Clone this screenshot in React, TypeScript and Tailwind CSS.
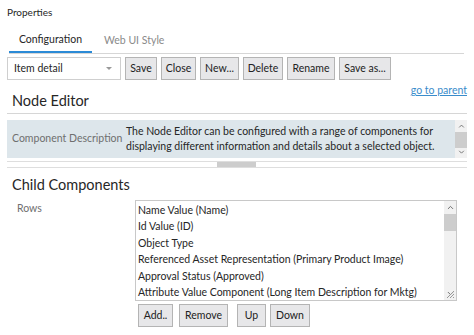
import { ChevronUp, ChevronDown } from "lucide-react";

const toolbar = [
	{ label: "Save", w: "w-[32px]" },
	{ label: "Close", w: "w-[35px]" },
	{ label: "New...", w: "w-[39px]" },
	{ label: "Delete", w: "w-[40px]" },
	{ label: "Rename", w: "w-[48px]" },
	{ label: "Save as...", w: "w-[52px]" },
];

const rows = [
	"Name Value (Name)",
	"Id Value (ID)",
	"Object Type",
	"Referenced Asset Representation (Primary Product Image)",
	"Approval Status (Approved)",
	"Attribute Value Component (Long Item Description for Mktg)",
];

function Btn({ label, className = "" }: { label: string; className?: string }) {
	return (
		<button
			className={`h-[23px] px-0 border border-[#b4b4b4] bg-[#e7e7e9] text-[10.5px] text-[#222] leading-none whitespace-nowrap ${className}`}
		>
			{label}
		</button>
	);
}

function VScroll({ className = "" }: { className?: string }) {
	return (
		<div className={`flex flex-col items-center w-[12px] bg-[#f1f1f1] ${className}`}>
			<ChevronUp size={9} strokeWidth={2.5} className="text-[#666] mt-[2px]" />
			<div className="w-full h-[17px] bg-[#cdcdcd] mt-[2px]" />
			<div className="flex-1" />
			<ChevronDown size={9} strokeWidth={2.5} className="text-[#666] mb-[2px]" />
		</div>
	);
}

export default function App() {
	return (
		<div
			className="w-[474px] h-[335px] bg-white overflow-hidden text-[#262626]"
			style={{ fontFamily: 'Lato, "Open Sans", sans-serif' }}
		>
			{/* Header */}
			<p className="pl-[7px] pt-[4px] text-[10px] leading-[16px]">Properties</p>

			{/* Tabs */}
			<div className="mx-[9px] mr-[10px] mt-[8px] flex border-b border-[#d6d6d6]">
				<div className="w-[83px] h-[25px] flex items-center justify-center text-[10.5px] border-b-2 border-[#2b8ad6] -mb-px">
					Configuration
				</div>
				<div className="pl-[12px] h-[25px] flex items-center text-[10.5px] text-[#8a8a8a]">
					Web UI Style
				</div>
			</div>

			{/* Toolbar */}
			<div className="mt-[3px] px-[7px] flex items-center gap-[4px]">
				<div className="w-[114px] h-[23px] border border-[#cfcfcf] bg-white flex items-center justify-between pl-[6px] pr-[8px] text-[10.5px]">
					<span>Item detail</span>
					<span className="w-0 h-0 border-l-[3px] border-r-[3px] border-t-[3px] border-l-transparent border-r-transparent border-t-[#999]" />
				</div>
				{toolbar.map((t) => (
					<Btn key={t.label} label={t.label} className={t.w} />
				))}
			</div>

			{/* Node editor */}
			<div className="mx-[7px] mr-[7px]">
				<div className="flex justify-end mt-[4px] h-[12px]">
					<a className="text-[10.5px] leading-[12px] text-[#3a8ccb] underline">go to parent</a>
				</div>
				<h2 className="pl-[5px] text-[14.5px] leading-[20px] -mt-[5px]">Node Editor</h2>
				<div className="mt-[2px] border-t border-[#d6d6d6]" />
				<div className="mt-[6px] flex h-[38px]">
					<div className="flex-1 bg-[#dde6eb] flex items-center">
						<span className="w-[119px] pl-[5px] text-[10.5px] text-[#6f6f6f] shrink-0">Component Description</span>
						<p className="text-[10.5px] leading-[15px]">
							The Node Editor can be configured with a range of components for displaying different
							information and details about a selected object.
						</p>
					</div>
					<VScroll />
				</div>
				<div className="mt-[3px] h-[7px] border-t border-b border-[#dedede] bg-white">
					<div className="ml-[210px] w-[39px] h-full bg-[#cdcdcd]" />
				</div>
			</div>

			{/* Child components */}
			<h2 className="pl-[12px] mt-[7px] text-[14.5px] leading-[20px]">Child Components</h2>
			<div className="flex mt-[5px] pl-[17px]">
				<span className="w-[118px] text-[10.5px] text-[#6f6f6f] leading-[16px]">Rows</span>
				<div className="flex flex-col">
					<div className="w-[322px] h-[101px] border border-[#c8c8c8] flex">
						<ul className="flex-1 pt-[1px] pl-[2px] overflow-hidden">
							{rows.map((r) => (
								<li key={r} className="text-[10.5px] leading-[16.4px] whitespace-nowrap">
									{r}
								</li>
							))}
						</ul>
						<div className="relative flex">
							<VScroll className="h-full" />
							<svg
								width="10"
								height="10"
								viewBox="0 0 10 10"
								className="absolute right-[1px] bottom-[1px]"
							>
								<path d="M9 2 L2 9 M9 5 L5 9 M9 8 L8 9" stroke="#999" strokeWidth="1" />
							</svg>
						</div>
					</div>
					<div className="mt-[3px] ml-[3px] flex">
						<Btn label="Add.." className="w-[35px]" />
						<Btn label="Remove" className="w-[49px] ml-[6px]" />
						<Btn label="Up" className="w-[29px] ml-[9px]" />
						<Btn label="Down" className="w-[40px] ml-[4px]" />
					</div>
				</div>
			</div>
		</div>
	);
}
